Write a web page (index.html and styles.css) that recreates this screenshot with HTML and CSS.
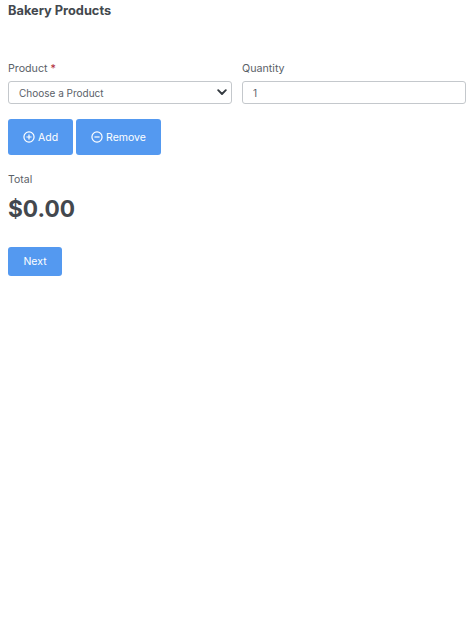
FILE: index.html
```html
<!DOCTYPE html>
<html>
<head>
    <meta charset="UTF-8">
    <title>Bakery Products</title>
    <link rel="stylesheet" href="styles.css">
</head>
<body>
    <h1 class="title">Bakery Products</h1>
    <div class="fields">
        <div class="field">
            <label class="field-label">Product <span class="required">*</span></label>
            <div class="select-box">
                <span>Choose a Product</span>
                <svg class="chevron" width="10" height="7" viewBox="0 0 10 7"><path d="M1.2 1.2 L5 5 L8.8 1.2" fill="none" stroke="#343a40" stroke-width="1.9" stroke-linecap="round" stroke-linejoin="round"/></svg>
            </div>
        </div>
        <div class="field">
            <label class="field-label">Quantity</label>
            <input class="input-box" type="text" value="1">
        </div>
    </div>
    <div class="actions">
        <button class="btn btn-tall">
            <svg width="12" height="12" viewBox="0 0 13 13"><circle cx="6.5" cy="6.5" r="5.5" fill="none" stroke="#fff" stroke-width="1.3"/><path d="M3.7 6.5 H9.3 M6.5 3.7 V9.3" stroke="#fff" stroke-width="1.3"/></svg>
            Add
        </button>
        <button class="btn btn-tall">
            <svg width="12" height="12" viewBox="0 0 13 13"><circle cx="6.5" cy="6.5" r="5.5" fill="none" stroke="#fff" stroke-width="1.3"/><path d="M3.7 6.5 H9.3" stroke="#fff" stroke-width="1.3"/></svg>
            Remove
        </button>
    </div>
    <div class="total-label">Total</div>
    <div class="total">$0.00</div>
    <button class="btn btn-next">Next</button>
</body>
</html>
```

FILE: styles.css
```css
body {
    margin: 0;
    padding: 0 8px;
    background-color: #fff;
    font-family: Inter, "Liberation Sans", sans-serif;
    color: #5a6168;
}

.title {
    margin: 3px 0 0;
    font-size: 12.8px;
    line-height: 16px;
    font-weight: 700;
    color: #43484e;
}

.fields {
    display: grid;
    grid-template-columns: 224px 224px;
    gap: 10px;
    margin-top: 42px;
}

.field-label {
    display: block;
    font-size: 10.7px;
    line-height: 15px;
    margin-bottom: 5px;
}

.required {
    color: #b02a37;
}

.select-box,
.input-box {
    box-sizing: border-box;
    display: flex;
    align-items: center;
    justify-content: space-between;
    width: 100%;
    height: 23px;
    padding: 0 10px;
    border: 1px solid #c4c8cc;
    border-radius: 3px;
    background-color: #fff;
    font-family: inherit;
    font-size: 10px;
    color: #5a6168;
}

.select-box {
    padding-right: 4px;
}

.actions {
    display: flex;
    gap: 3px;
    margin-top: 15px;
}

.btn {
    display: flex;
    align-items: center;
    justify-content: center;
    gap: 3px;
    border: none;
    border-radius: 3px;
    background-color: #5499f0;
    color: #fff;
    font-family: inherit;
    font-size: 10.5px;
}

.btn-tall {
    height: 36px;
    padding: 0 15px;
}

.total-label {
    margin-top: 17px;
    font-size: 10.5px;
    line-height: 16px;
}

.total {
    margin-top: 7px;
    font-size: 22.7px;
    line-height: 28px;
    font-weight: 700;
    color: #43484e;
}

.btn-next {
    width: 54px;
    height: 29px;
    margin-top: 24px;
}
```
